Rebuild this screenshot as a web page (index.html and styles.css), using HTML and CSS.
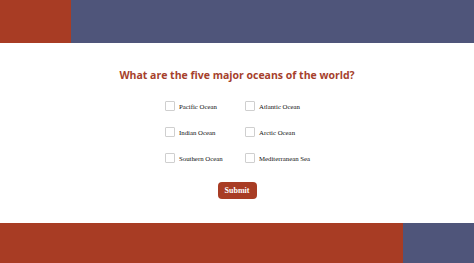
FILE: index.html
```html
<!DOCTYPE html>
<html>
<head>
<meta charset="utf-8">
<link rel="stylesheet" href="styles.css">
</head>
<body>
<div class="page">
  <div class="bar top">
    <div class="seg red small"></div>
    <div class="seg blue grow"></div>
  </div>
  <main class="quiz">
    <h1 class="title">What are the five major oceans of the world?</h1>
    <div class="options">
      <label class="opt"><span class="box"></span>Pacific Ocean</label>
      <label class="opt"><span class="box"></span>Atlantic Ocean</label>
      <label class="opt"><span class="box"></span>Indian Ocean</label>
      <label class="opt"><span class="box"></span>Arctic Ocean</label>
      <label class="opt"><span class="box"></span>Southern Ocean</label>
      <label class="opt"><span class="box"></span>Mediterranean Sea</label>
    </div>
    <button class="submit">Submit</button>
  </main>
  <div class="bar bottom">
    <div class="seg red grow"></div>
    <div class="seg blue tail"></div>
  </div>
</div>
</body>
</html>
```
FILE: styles.css
```css
html, body {
  margin: 0;
  padding: 0;
  background: #ffffff;
}
.page {
  display: flex;
  flex-direction: column;
  width: 474px;
  height: 263px;
}
.bar {
  display: flex;
}
.bar.top { height: 43px; }
.bar.bottom { height: 40px; }
.seg.red { background: #a83c24; }
.seg.blue { background: #4f557a; }
.seg.small { width: 71px; }
.seg.tail { width: 71px; }
.seg.grow { flex: 1; }
.quiz {
  flex: 1;
  display: flex;
  flex-direction: column;
  align-items: center;
  padding-top: 24px;
  box-sizing: border-box;
}
.title {
  margin: 0;
  font-family: "Open Sans", sans-serif;
  font-weight: 700;
  font-size: 10.5px;
  line-height: 16px;
  color: #a63f2c;
}
.options {
  margin-top: 10px;
  display: grid;
  grid-template-columns: 80px 64px;
  grid-auto-rows: 26px;
  align-items: center;
}
.opt {
  display: flex;
  align-items: center;
  gap: 4px;
  font-family: "Liberation Serif", serif;
  font-size: 6.8px;
  color: #111;
  white-space: nowrap;
}
.box {
  flex: none;
  width: 8px;
  height: 8px;
  border: 1px solid #cfcfcf;
  border-radius: 1px;
  background: #fff;
}
.submit {
  margin-top: 11px;
  width: 39px;
  height: 17px;
  border: none;
  border-radius: 4px;
  background: #a83c24;
  color: #fff;
  font-family: "Liberation Serif", serif;
  font-weight: 700;
  font-size: 8px;
  padding: 0;
}
```
